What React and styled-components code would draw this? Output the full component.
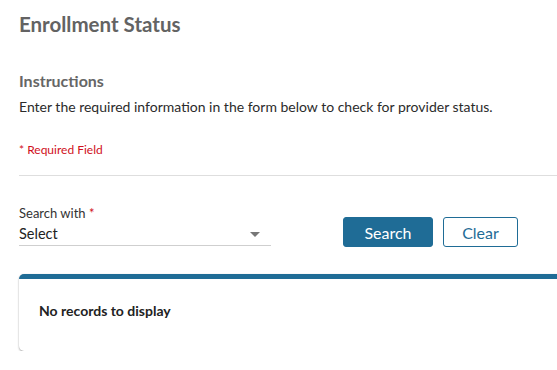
import React from "react";
import styled, { createGlobalStyle } from "styled-components";

const Global = createGlobalStyle`
  html, body { margin: 0; padding: 0; background: #fff; overflow: hidden; }
  body { font-family: Lato, "Open Sans", sans-serif; }
`;

const Page = styled.div`
  width: 600px;
  padding: 11px 0 0 19px;
  box-sizing: border-box;
`;

const Title = styled.h1`
  margin: 0;
  font-size: 20.5px;
  line-height: 26px;
  font-weight: 700;
  color: #636363;
`;

const SectionTitle = styled.h2`
  margin: 34px 0 0;
  font-size: 16px;
  line-height: 20px;
  font-weight: 700;
  color: #666;
`;

const Text = styled.p`
  margin: 6px 0 0;
  font-size: 14px;
  line-height: 20px;
  color: #2b2b2b;
`;

const Required = styled.div`
  margin-top: 25px;
  font-size: 12px;
  line-height: 16px;
  color: #d0101b;
`;

const Divider = styled.hr`
  margin: 17px 0 0;
  border: 0;
  border-top: 1px solid #dedede;
`;

const FormRow = styled.div`
  display: flex;
  align-items: flex-end;
  margin-top: 29px;
`;

const Field = styled.div`
  width: 252px;
  display: flex;
  flex-direction: column;
`;

const Label = styled.label`
  font-size: 13px;
  line-height: 16px;
  color: #333;
  span { color: #d0101b; }
`;

const SelectBox = styled.div`
  display: flex;
  align-items: center;
  justify-content: space-between;
  height: 24px;
  border-bottom: 1px solid #cfcfcf;
  font-size: 14.5px;
  color: #222;
  padding-right: 11px;
`;

const Caret = styled.span`
  width: 0;
  height: 0;
  margin-top: 2px;
  border-left: 5px solid transparent;
  border-right: 5px solid transparent;
  border-top: 5px solid #777;
`;

const Buttons = styled.div`
  display: flex;
  gap: 10px;
  margin-left: 72px;
  margin-bottom: -1px;
`;

const Button = styled.button`
  height: 30px;
  padding: 0;
  width: ${(p) => p.$w}px;
  border-radius: 3px;
  font-family: Lato, sans-serif;
  font-size: 16px;
  border: 1px solid #1f6c96;
  background: ${(p) => (p.$primary ? "#1f6c96" : "#fff")};
  color: ${(p) => (p.$primary ? "#fff" : "#1f6c96")};
  cursor: pointer;
`;

const Card = styled.div`
  margin-top: 28px;
  border-top: 5px solid #1f6c96;
  border-radius: 5px;
  background: #fff;
  box-shadow: 0 1px 2px rgba(0, 0, 0, 0.35), 0 0 1px rgba(0, 0, 0, 0.08);
  padding: 23px 20px 31px;
  font-size: 14px;
  line-height: 18px;
  font-weight: 700;
  color: #222;
`;

export default function App() {
  return (
    <>
      <Global />
      <Page>
        <Title>Enrollment Status</Title>
        <SectionTitle>Instructions</SectionTitle>
        <Text>Enter the required information in the form below to check for provider status.</Text>
        <Required>* Required Field</Required>
        <Divider />
        <FormRow>
          <Field>
            <Label>Search with <span>*</span></Label>
            <SelectBox>Select<Caret /></SelectBox>
          </Field>
          <Buttons>
            <Button $primary $w={90}>Search</Button>
            <Button $w={75}>Clear</Button>
          </Buttons>
        </FormRow>
        <Card>No records to display</Card>
      </Page>
    </>
  );
}
